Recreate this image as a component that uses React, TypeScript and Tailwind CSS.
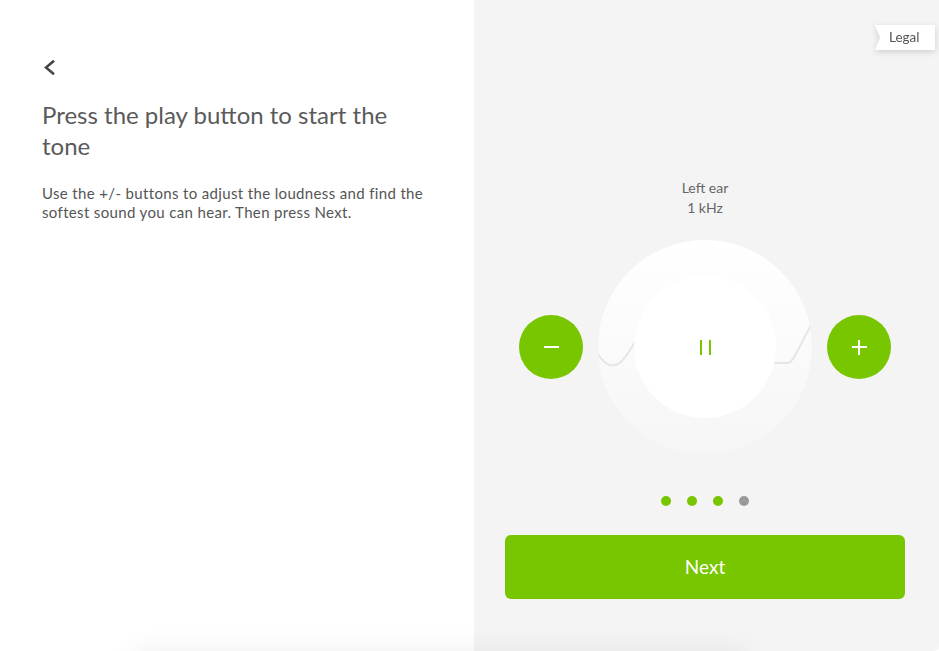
import React from "react";

const GREEN = "bg-[#77c600]";

const ToneCircle = () => (
  <div className="relative flex h-[214px] w-[214px] items-center justify-center overflow-hidden rounded-full bg-gradient-to-b from-white to-[#f6f6f6]">
    <svg className="absolute inset-0" width="214" height="214" viewBox="0 0 214 214" fill="none">
      <path d="M0 114 C6 124 12 128 20 124 C27 120 32 110 42 94" stroke="#e6e6e6" strokeWidth="2" />
      <path d="M168 123 L190 123 C196 122 202 104 216 80" stroke="#e6e6e6" strokeWidth="2" />
    </svg>
    <div className="relative flex h-[142px] w-[142px] items-center justify-center gap-[7px] rounded-full bg-white">
      <span className={`h-[15px] w-[2px] ${GREEN}`} />
      <span className={`h-[15px] w-[2px] ${GREEN}`} />
    </div>
  </div>
);

const RoundButton = ({ plus }: { plus?: boolean }) => (
  <button className={`relative flex h-[64px] w-[64px] items-center justify-center rounded-full ${GREEN}`}>
    <span className="h-[2px] w-[15px] bg-white" />
    {plus && <span className="absolute h-[15px] w-[2px] bg-white" />}
  </button>
);

export default function App() {
  const dots = ["bg-[#77c600]", "bg-[#77c600]", "bg-[#77c600]", "bg-[#999999]"];

  return (
    <div
      className="relative flex h-[651px] w-[939px] overflow-hidden rounded-b-[5px] bg-white"
      style={{ fontFamily: "Lato, 'Open Sans', sans-serif" }}
    >
      {/* question side */}
      <div className="w-[474px] bg-white pl-[42px] pt-[59px] text-[#555]">
        <button className="block h-[17px] w-[14px]">
          <svg width="14" height="17" viewBox="0 0 14 17" fill="none">
            <polyline points="12,1.8 4,8.5 12,15.2" stroke="#444" strokeWidth="2.5" />
          </svg>
        </button>
        <h1 className="mt-[23px] w-[370px] text-[24px] leading-[31px] text-[#5a5a5a]">
          Press the play button to start the tone
        </h1>
        <p className="mt-[23px] w-[396px] text-[15px] leading-[19px] tracking-[0.35px]">
          Use the +/- buttons to adjust the loudness and find the softest sound you can hear. Then press Next.
        </p>
      </div>

      {/* test side */}
      <div className="relative flex flex-1 flex-col items-center bg-[#f4f4f4] pr-[3px] pt-[178px]">
        <div className="absolute right-[4px] top-[25px] drop-shadow-[0_2px_3px_rgba(0,0,0,0.15)]">
          <div className="flex h-[25px] w-[60px] items-center bg-white pl-[14px] text-[13.5px] text-[#555] [clip-path:polygon(0_0,100%_0,100%_100%,0_100%,5px_50%)]">
            Legal
          </div>
        </div>

        <div className="text-center text-[14px] leading-[20px] text-[#666]">
          <div>Left ear</div>
          <div>1 kHz</div>
        </div>

        <div className="mt-[22px] flex items-center gap-[15px]">
          <RoundButton />
          <ToneCircle />
          <RoundButton plus />
        </div>

        <div className="mt-[42px] flex gap-[16px]">
          {dots.map((c, i) => (
            <span key={i} className={`h-[10px] w-[10px] rounded-full ${c}`} />
          ))}
        </div>

        <button className={`mt-[29px] h-[64px] w-[400px] rounded-[6px] text-[19px] text-white ${GREEN}`}>
          Next
        </button>
      </div>

      <div className="pointer-events-none absolute bottom-[-34px] left-[130px] h-[34px] w-[620px] rounded-full shadow-[0_0_28px_rgba(0,0,0,0.07)]" />
    </div>
  );
}
